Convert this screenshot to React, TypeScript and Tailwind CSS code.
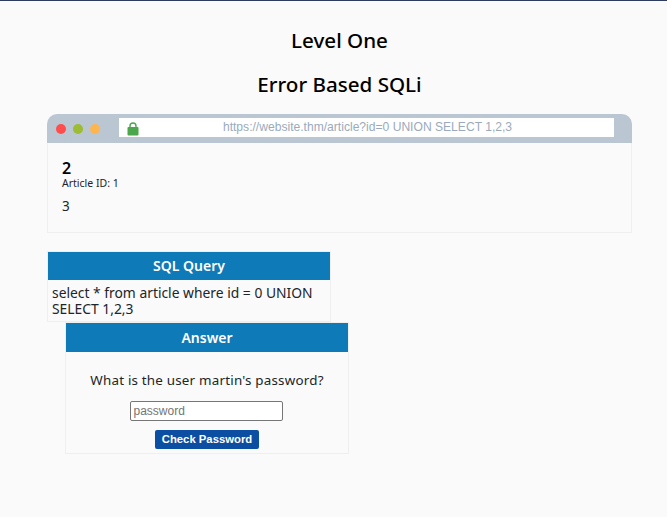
export default function App() {
  return (
    <div className="min-h-[517px] bg-[#fafafa] border-t border-[#2c3b5e] font-['Noto_Sans',sans-serif] text-[#212529]">
      <div className="px-[35px] pt-[24px]">
        <h1 className="ml-[12px] text-center text-[20.6px] leading-[30px] font-medium text-black">Level One</h1>
        <h1 className="ml-[12px] mt-[14px] text-center text-[20.6px] leading-[30px] font-medium text-black">Error Based SQLi</h1>

        {/* browser */}
        <div className="ml-[12px] mt-[15px] w-[585px]">
          <div className="flex h-[29px] items-start rounded-t-[10px] bg-[#bac7d2]">
            <div className="flex items-center gap-[7px] pl-[9px] pt-[10px]">
              <span className="h-[10px] w-[10px] rounded-full bg-[#fd4d4d]" />
              <span className="h-[10px] w-[10px] rounded-full bg-[#9dbb33]" />
              <span className="h-[10px] w-[10px] rounded-full bg-[#fdb64f]" />
            </div>
            <div className="relative ml-[19px] mt-[4px] flex h-[19px] w-[495px] items-center justify-center bg-white font-['Liberation_Sans',sans-serif] text-[12.1px] text-[#9aaabc]">
              <svg className="absolute left-[8px] top-[4px]" width="12" height="15" viewBox="0 0 12 15">
                <path d="M3 6V4a3 3 0 0 1 6 0v2" fill="none" stroke="#4ca64c" strokeWidth="1.4" />
                <rect x="0.5" y="5" width="11" height="8.5" rx="1" fill="#4ca64c" />
              </svg>
              <span className="pb-[1px] pl-[2px]">https://website.thm/article?id=0 UNION SELECT 1,2,3</span>
            </div>
          </div>
          <div className="h-[90px] border border-t-0 border-[#efefef] px-[14px] pt-[17px]">
            <div className="text-[16px] leading-[16px] font-semibold text-black">2</div>
            <div className="mt-[2px] text-[10.5px] leading-[11px]">Article ID: 1</div>
            <div className="mt-[8px] text-[13.5px] leading-[18px]">3</div>
          </div>
        </div>

        {/* query */}
        <div className="ml-[12px] mt-[18px] w-[284px] border border-[#efefef]">
          <div className="h-[28px] bg-[#0f7ab8] text-center text-[14px] leading-[28px] font-semibold text-white">SQL Query</div>
          <div className="h-[41px] px-[4px] pt-[5px] text-[13.85px] leading-[16px]">select * from article where id = 0 UNION SELECT 1,2,3</div>
        </div>

        {/* answer */}
        <div className="ml-[30px] w-[284px] border border-[#efefef]">
          <div className="h-[29px] bg-[#0f7ab8] text-center text-[14px] leading-[29px] font-semibold text-white">Answer</div>
          <div className="flex h-[101px] flex-col items-center">
            <p className="mt-[19px] text-[13.4px] leading-[18px] tracking-[0.2px]">What is the user martin's password?</p>
            <input
              placeholder="password"
              readOnly
              className="mr-[2px] mt-[12px] h-[20px] w-[153px] rounded-[2px] border border-[#767676] bg-white px-[3px] font-['Liberation_Sans',sans-serif] text-[12px] placeholder:text-[#757575]"
            />
            <button className="mt-[9px] h-[19px] w-[104px] rounded-[2px] bg-[#0c4ea2] font-['Liberation_Sans',sans-serif] text-[11.3px] font-bold leading-[19px] text-white">
              Check Password
            </button>
          </div>
        </div>
      </div>
    </div>
  );
}
